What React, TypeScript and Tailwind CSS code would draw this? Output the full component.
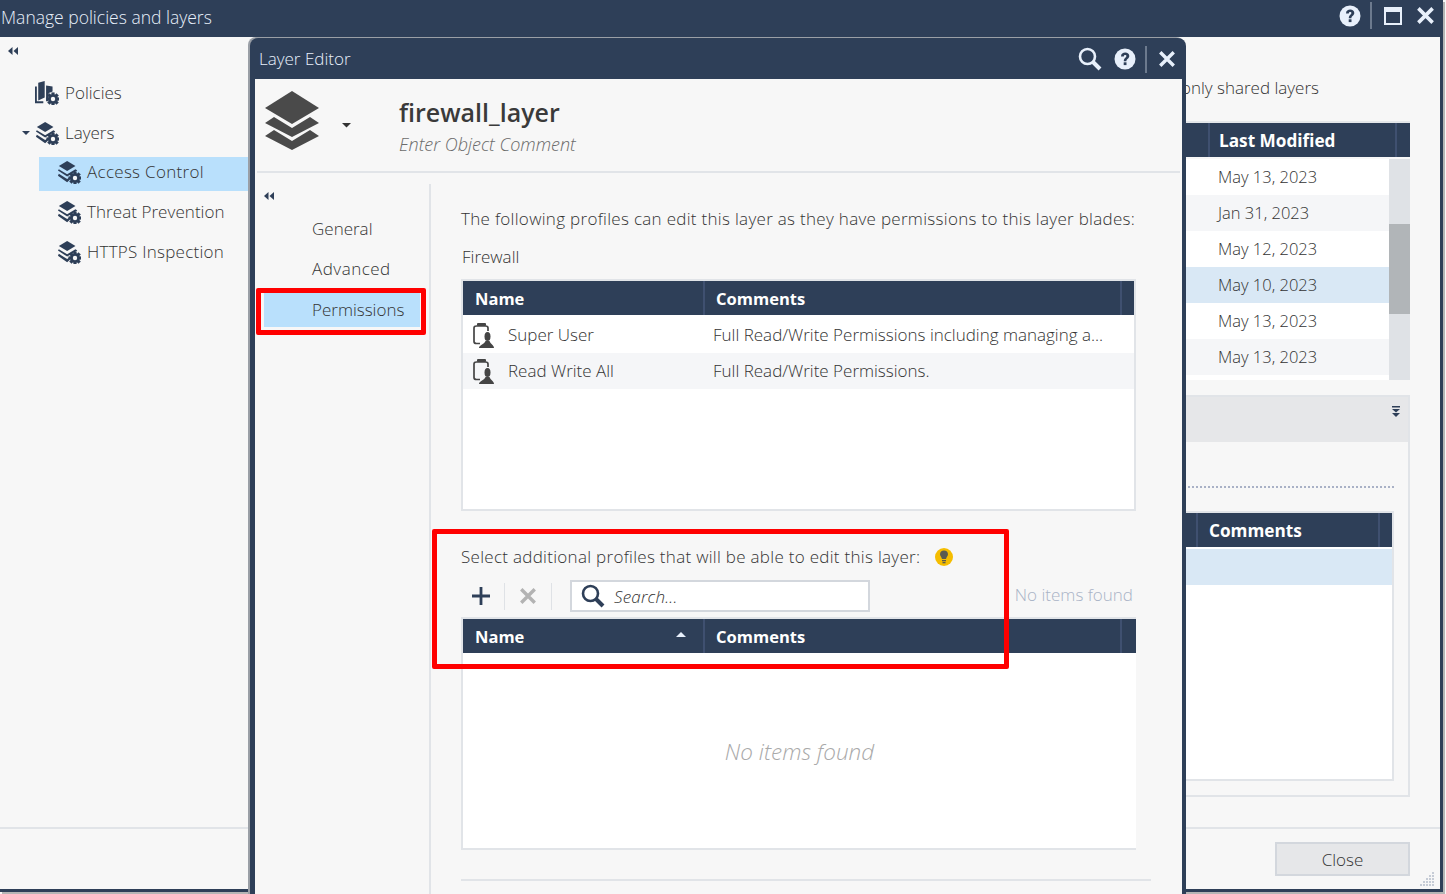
const navy = "#2e3f58";

function Gear({ x, y, r = 6.2, c = "#2e3f58" }: { x: number; y: number; r?: number; c?: string }) {
  const teeth = [0, 45, 90, 135];
  return (
    <g>
      {teeth.map((a) => (
        <rect key={a} x={x - r * 0.28} y={y - r * 1.15} width={r * 0.56} height={r * 2.3} fill={c} transform={`rotate(${a} ${x} ${y})`} />
      ))}
      <circle cx={x} cy={y} r={r * 0.85} fill={c} />
      <circle cx={x} cy={y} r={r * 0.38} fill="#f7f7f7" />
    </g>
  );
}

function LayersGear() {
  return (
    <svg width="24" height="24" viewBox="0 0 26 26" className="shrink-0 block">
      <path d="M11 1 L20 6.5 L11 12 L2 6.5 Z" fill={navy} />
      <path d="M2 10 L11 15.5 L20 10 L22 11.5 L11 18 L1 11.5 Z" fill={navy} />
      <path d="M2 15 L11 20.5 L13.5 19 L14 21.5 L11 24 L1 17 Z" fill={navy} />
      <Gear x={19.5} y={19.5} />
    </svg>
  );
}

function PoliciesIcon() {
  return (
    <svg width="24" height="24" viewBox="0 0 26 26" className="shrink-0 block">
      <path d="M0 6 L2 6 L2 22 L9 22 L9 24 L0 24 Z" fill={navy} />
      <path d="M3.5 2 L10.5 0 L10.5 18 L3.5 21 Z" fill={navy} />
      <path d="M12 5 L19 6 L19 11.5 L15 13 L14 22 L12 22 Z" fill={navy} />
      <Gear x={19.5} y={19.5} />
    </svg>
  );
}

function BigLayers() {
  return (
    <svg width="56" height="60" viewBox="0 0 56 60">
      <path d="M28 1 L55 18 L28 34 L1 18 Z" fill="#4a4a4a" />
      <path d="M1 33 L10 27 L28 38 L46 27 L55 33 L28 47 Z" fill="#4a4a4a" />
      <path d="M1 46 L10 40 L28 51 L46 40 L55 46 L28 60 Z" fill="#4a4a4a" />
    </svg>
  );
}

function DoubleLeft() {
  return (
    <svg width="10" height="8" viewBox="0 0 10 8">
      <path d="M4.5 0 V8 L0 4 Z M10 0 V8 L5.5 4 Z" fill={navy} />
    </svg>
  );
}

function Caret({ color = "#2e3f58", up = false, w = 8 }: { color?: string; up?: boolean; w?: number }) {
  return (
    <svg width={w} height={w / 2} viewBox="0 0 8 4" className="block">
      <path d={up ? "M0 4 L4 0 L8 4 Z" : "M0 0 L8 0 L4 4 Z"} fill={color} />
    </svg>
  );
}

function HelpCircle({ size = 22 }: { size?: number }) {
  return (
    <svg width={size} height={size} viewBox="0 0 22 22" className="block">
      <circle cx="11" cy="11" r="10.5" fill="#e8f0fb" />
      <path d="M7 8.5 C7 5.5 9 4.5 11.2 4.5 C13.6 4.5 15.3 6 15.3 8 C15.3 10.6 12.4 10.8 12.4 13.2 H9.8 C9.8 9.8 12.4 9.6 12.4 8 C12.4 7.2 11.9 6.9 11.1 6.9 C10.2 6.9 9.8 7.5 9.8 8.5 Z" fill={navy} />
      <rect x="9.7" y="14.3" width="2.8" height="2.8" fill={navy} />
    </svg>
  );
}

function CloseX({ size = 16, color = "#e8f0fb" }: { size?: number; color?: string }) {
  return (
    <svg width={size} height={size} viewBox="0 0 16 16" className="block">
      <path d="M2 2 L14 14 M14 2 L2 14" stroke={color} strokeWidth="3" />
    </svg>
  );
}

function SearchGlass({ size = 24, color = "#e8f0fb" }: { size?: number; color?: string }) {
  return (
    <svg width={size} height={size} viewBox="0 0 24 24" fill="none" className="block">
      <circle cx="9.5" cy="9.5" r="7.5" stroke={color} strokeWidth="2.6" />
      <path d="M15 15 L22 22" stroke={color} strokeWidth="4" />
    </svg>
  );
}

function ProfileIcon() {
  return (
    <svg width="21" height="25" viewBox="0 0 21 25" className="shrink-0 block">
      <path d="M3.5 3 H12.5 Q15 3 15 5 V8 M3.5 3 Q1 3 1 5 V18.5 Q1 20.5 3.5 20.5 H7" fill="none" stroke="#454545" strokeWidth="1.7" />
      <rect x="4" y="0" width="9" height="3" rx="1" fill="#454545" />
      <ellipse cx="14.5" cy="13.5" rx="3" ry="4.5" fill="#454545" />
      <path d="M6 25 C6 22 11 21.5 12.5 18 H16.5 C18 21.5 21 22 21 25 Z" fill="#454545" />
    </svg>
  );
}

function Bulb() {
  return (
    <svg width="18" height="18" viewBox="0 0 18 18" className="block">
      <circle cx="9" cy="9" r="9" fill="#f5bd00" />
      <path d="M9 2.5 C6.5 2.5 5 4.2 5 6.3 C5 8.2 6.6 9 7 11 H11 C11.4 9 13 8.2 13 6.3 C13 4.2 11.5 2.5 9 2.5 Z" fill="#5a5a50" />
      <rect x="7" y="12" width="4" height="1.3" fill="#5a5a50" />
      <rect x="7.5" y="14" width="3" height="1.3" fill="#5a5a50" />
    </svg>
  );
}

function Grip() {
  const dots = [[12, 0], [12, 3], [9, 3], [12, 6], [9, 6], [6, 6], [12, 9], [9, 9], [6, 9], [3, 9], [12, 12], [9, 12], [6, 12], [3, 12], [0, 12]];
  return (
    <svg width="15" height="15" viewBox="0 0 15 15" className="block">
      {dots.map(([x, y]) => (
        <rect key={`${x}-${y}`} x={x} y={y} width="2" height="2" fill="#c6ccd6" />
      ))}
    </svg>
  );
}

function Sidebar() {
  const subs: [string, string][] = [
    ["Access Control", "tracking-[0.3px]"],
    ["Threat Prevention", "tracking-[0.06px]"],
    ["HTTPS Inspection", "tracking-[0.25px]"],
  ];
  return (
    <div className="w-[250px] shrink-0 flex flex-col pt-[10px]">
      <div className="pl-[8px] h-[8px] flex items-center"><DoubleLeft /></div>
      <div className="mt-[18px] flex items-center h-[40px] pl-[35px] gap-[6px]">
        <PoliciesIcon />
        <span>Policies</span>
      </div>
      <div className="flex items-center h-[40px] pl-[22px]">
        <span className="w-[13px]"><Caret /></span>
        <LayersGear />
        <span className="ml-[6px]">Layers</span>
      </div>
      <div className="pl-[39px] flex flex-col gap-[6px] mt-[4px]">
        {subs.map(([s, track], i) => (
          <div key={s} className={`flex items-center h-[34px] pl-[18px] gap-[6px] pb-[4px] ${i === 0 ? "bg-[#b9e0fc]" : ""}`}>
            <LayersGear />
            <span className={`pb-[1px] ${track}`}>{s}</span>
          </div>
        ))}
      </div>
    </div>
  );
}

function RightColumn() {
  const rows = [
    ["May 13, 2023", "bg-white"],
    ["Jan 31, 2023", "bg-[#f5f6f8]"],
    ["May 12, 2023", "bg-white"],
    ["May 10, 2023", "bg-[#d9e8f5]"],
    ["May 13, 2023", "bg-white"],
    ["May 13, 2023", "bg-[#f5f6f8]"],
  ];
  return (
    <div className="w-[310px] ml-auto mr-[30px] flex flex-col">
      <div className="h-[84px] pt-[38px] text-right pr-[91px] whitespace-nowrap">Show only shared layers</div>
      <div className="border-t-2 border-[#e4e7ea] h-[259px] flex flex-col overflow-hidden">
        <div className="h-[34px] shrink-0 flex font-bold text-white text-[17.2px]" style={{ backgroundColor: navy }}>
          <div className="w-[110px] border-r-2 border-[#3f5070]" />
          <div className="flex-1 pl-[9px] pt-[1px] flex items-center border-r-2 border-[#3f5070]">Last Modified</div>
          <div className="w-[13px]" />
        </div>
        <div className="flex flex-1 mt-[2px]">
          <div className="flex-1 flex flex-col">
            {rows.map(([d, bg]) => (
              <div key={d + bg} className={`h-[36px] shrink-0 flex items-center pl-[118px] text-[16.5px] ${bg}`}>{d}</div>
            ))}
            <div className="flex-1 bg-white" />
          </div>
          <div className="w-[21px] flex flex-col bg-[#dfe2e6]">
            <div className="h-[65px]" />
            <div className="h-[90px] bg-[#b1b5b8]" />
          </div>
        </div>
      </div>
      <div className="mt-[15px] h-[402px] border-2 border-[#e1e4e8] flex flex-col">
        <div className="h-[45px] shrink-0 bg-[#e6e7e9] flex justify-end pr-[8px] pt-[9px]">
          <svg width="8" height="11" viewBox="0 0 8 11">
            <path d="M0 0 H8 V1.5 H0 Z M0 3 H8 L4 6.5 Z M0 7 H8 L4 11 Z" fill={navy} />
          </svg>
        </div>
        <div className="flex-1 pr-[14px] flex flex-col">
          <div className="mt-[44px] border-t-2 border-dotted border-[#a9b1c6] ml-[2px]" />
          <div className="mt-[23px] flex-1 mb-[14px] border-2 border-[#e1e4e8] bg-white flex flex-col">
            <div className="h-[34px] shrink-0 flex text-white font-bold text-[17.2px]" style={{ backgroundColor: navy }}>
              <div className="w-[94px] border-r-2 border-[#3f5070] shrink-0" />
              <div className="flex-1 pl-[11px] pt-[2px] flex items-center border-r-2 border-[#3f5070]">Comments</div>
              <div className="w-[12px]" />
            </div>
            <div className="h-[36px] mt-[2px] bg-[#d9e8f5]" />
          </div>
        </div>
      </div>
      <div className="flex-1" />
    </div>
  );
}

function NavItem({ label, active = false, className = "" }: { label: string; active?: boolean; className?: string }) {
  return (
    <div className={`h-[35px] ml-[9px] mr-[9px] pl-[48px] flex items-center mt-[5px] ${active ? "bg-[#b9e0fc]" : ""} ${className}`}>{label}</div>
  );
}

function HeaderCell({ label, className = "" }: { label: string; className?: string }) {
  return <div className={`pt-[2px] flex items-center border-r-2 border-[#3f5070] ${className}`}>{label}</div>;
}

function LayerEditor() {
  return (
    <div className="absolute left-[250px] top-[38px] w-[936px] h-[870px] rounded-tl-[8px] rounded-tr-[8px] border-l-[5px] border-r-[4px] border-t border-[#2e3f58] flex flex-col shadow-[-2px_-1px_0_0_#9a9fa6]" style={{ backgroundColor: "#f7f7f7" }}>
      <div className="h-[40px] shrink-0 flex items-center text-[#e8f0fb] text-[17px] pl-[4px] pr-[6px]" style={{ backgroundColor: navy }}>
        <span>Layer Editor</span>
        <div className="ml-auto flex items-center">
          <SearchGlass size={24} />
          <span className="ml-[12px]"><HelpCircle /></span>
          <span className="ml-[9px] w-[2px] h-[27px] bg-[#6c7a8e]" />
          <span className="ml-[11px]"><CloseX size={18} /></span>
        </div>
      </div>
      <div className="h-[94px] shrink-0 mx-[2px] border-b-2 border-[#e1e4e8] flex">
        <div className="ml-[7px] mt-[11px]"><BigLayers /></div>
        <div className="ml-[22px] mt-[44px]"><Caret w={9} color="#333" /></div>
        <div className="ml-[48px] mt-[16px] flex flex-col">
          <div className="text-[25px] leading-[34px] font-semibold text-[#3a3a3a]">firewall_layer</div>
          <div className="italic text-[#6b6b6b] text-[18px] leading-[26px] mt-[2px]">Enter Object Comment</div>
        </div>
      </div>
      <div className="flex flex-1 min-h-0">
        <div className="w-[176px] shrink-0 border-r-2 border-[#e1e4e8] mt-[11px] flex flex-col">
          <div className="h-[8px] pl-[9px] mt-[8px] flex items-center"><DoubleLeft /></div>
          <div className="mt-[6px]">
            <NavItem label="General" />
            <NavItem label="Advanced" className="tracking-[0.5px]" />
            <NavItem label="Permissions" active className="mt-[6px] pt-[1px]" />
          </div>
        </div>
        <div className="flex-1 pl-[30px] pr-[31px] flex flex-col">
          <div className="mt-[34px] leading-[24px] whitespace-nowrap tracking-[0.3px]">The following profiles can edit this layer as they have permissions to this layer blades:</div>
          <div className="mt-[14px] leading-[24px] pl-[1px]">Firewall</div>
          <div className="mt-[10px] w-[675px] h-[232px] border-2 border-[#e1e4e8] bg-white flex flex-col">
            <div className="h-[34px] shrink-0 flex text-white font-bold text-[16.5px]" style={{ backgroundColor: navy }}>
              <HeaderCell label="Name" className="w-[242px] pl-[12px]" />
              <HeaderCell label="Comments" className="w-[417px] pl-[11px]" />
            </div>
            <div className="h-[36px] mt-[2px] flex items-center">
              <span className="ml-[10px]"><ProfileIcon /></span>
              <span className="ml-[14px] w-[205px]">Super User</span>
              <span className="whitespace-nowrap">Full Read/Write Permissions including managing a...</span>
            </div>
            <div className="h-[36px] flex items-center bg-[#f5f6f8]">
              <span className="ml-[10px]"><ProfileIcon /></span>
              <span className="ml-[14px] w-[205px]">Read Write All</span>
              <span className="whitespace-nowrap">Full Read/Write Permissions.</span>
            </div>
          </div>
          <div className="mt-[34px] leading-[24px] flex items-center whitespace-nowrap">
            <span className="tracking-[0.29px]">Select additional profiles that will be able to edit this layer:</span>
            <span className="ml-[15px] flex"><Bulb /></span>
          </div>
          <div className="mt-[11px] h-[32px] flex items-center relative w-[673px]">
            <svg width="20" height="20" viewBox="0 0 20 20" className="ml-[10px]">
              <path d="M10 1 V19 M1 10 H19" stroke={navy} strokeWidth="2.8" />
            </svg>
            <span className="ml-[13px] w-[1px] h-[27px] bg-[#dfe2e6]" />
            <span className="ml-[14px] flex"><CloseX size={18} color="#b3b3b3" /></span>
            <span className="ml-[14px] w-[1px] h-[27px] bg-[#dfe2e6]" />
            <div className="ml-[18px] w-[300px] h-[32px] border-2 border-[#d3d7dd] bg-white flex items-center pl-[9px]">
              <SearchGlass size={24} color={navy} />
              <span className="ml-[9px] pt-[1px] italic text-[#333] tracking-[0.2px]">Search...</span>
            </div>
            <span className="ml-auto -mt-[3px] text-[#a9b3c6] whitespace-nowrap pr-[1px]">No items found</span>
          </div>
          <div className="mt-[5px] w-[675px] h-[233px] border-l-2 border-b-2 border-t-2 border-[#e1e4e8] bg-white flex flex-col">
            <div className="h-[34px] shrink-0 flex text-white font-bold text-[16.5px]" style={{ backgroundColor: navy }}>
              <HeaderCell label="Name" className="w-[242px] pl-[12px]" />
              <HeaderCell label="Comments" className="w-[417px] pl-[11px]" />
            </div>
            <div className="flex-1 flex items-center justify-center italic text-[#a9a9a9] text-[22.5px] pt-[2px]">No items found</div>
          </div>
          <div className="mt-[29px] h-[2px] bg-[#e1e4e8] w-[690px]" />
        </div>
      </div>
      <div className="absolute left-[421px] top-[593px]"><Caret color="#e8f0fb" up w={10} /></div>
      <div className="absolute left-[1px] top-[249px] w-[170px] h-[47px] border-[5px] border-[#ff0000] rounded-[2px]" />
      <div className="absolute left-[177px] top-[490px] w-[577px] h-[140px] border-[5px] border-[#ff0000] rounded-[2px]" />
    </div>
  );
}

export default function App() {
  return (
    <div className="relative w-[1446px] h-[894px] overflow-hidden text-[#333] text-[17px]" style={{ fontFamily: '"Open Sans", "Liberation Sans", sans-serif', fontWeight: 300, backgroundColor: "#f7f7f7" }}>
      <div className="w-[1443px] h-[892px] border-b-[3px] border-r-[3px] border-[#2e3f58] flex flex-col shadow-[2px_2px_0_0_#b5b5b5]">
        <div className="h-[37px] shrink-0 flex items-center text-[#e8f0fb] text-[17.5px] pl-[1px] pr-[5px] pb-[3px]" style={{ backgroundColor: navy }}>
          <span>Manage policies and layers</span>
          <div className="ml-auto flex items-center -mt-[3px]">
            <HelpCircle />
            <span className="ml-[9px] w-[2px] h-[27px] bg-[#6c7a8e]" />
            <svg width="18" height="18" viewBox="0 0 18 18" className="ml-[12px] block">
              <path d="M0 0 H18 V18 H0 Z M2 5 V16 H16 V5 Z" fill="#e8f0fb" fillRule="evenodd" />
            </svg>
            <span className="ml-[14px] flex"><CloseX size={19} /></span>
          </div>
        </div>
        <div className="flex flex-1 min-h-0">
          <Sidebar />
          <RightColumn />
        </div>
        <div className="shrink-0 h-[62px] border-t-2 border-[#e1e4e8] flex justify-end items-start pr-[30px] pt-[13px] relative">
          <button className="w-[135px] h-[34px] pt-[1px] bg-[#e6e7e9] border-2 border-[#d3d7dd] text-[#333]">Close</button>
          <span className="absolute right-[5px] bottom-[2px] flex"><Grip /></span>
        </div>
      </div>
      <LayerEditor />
    </div>
  );
}
